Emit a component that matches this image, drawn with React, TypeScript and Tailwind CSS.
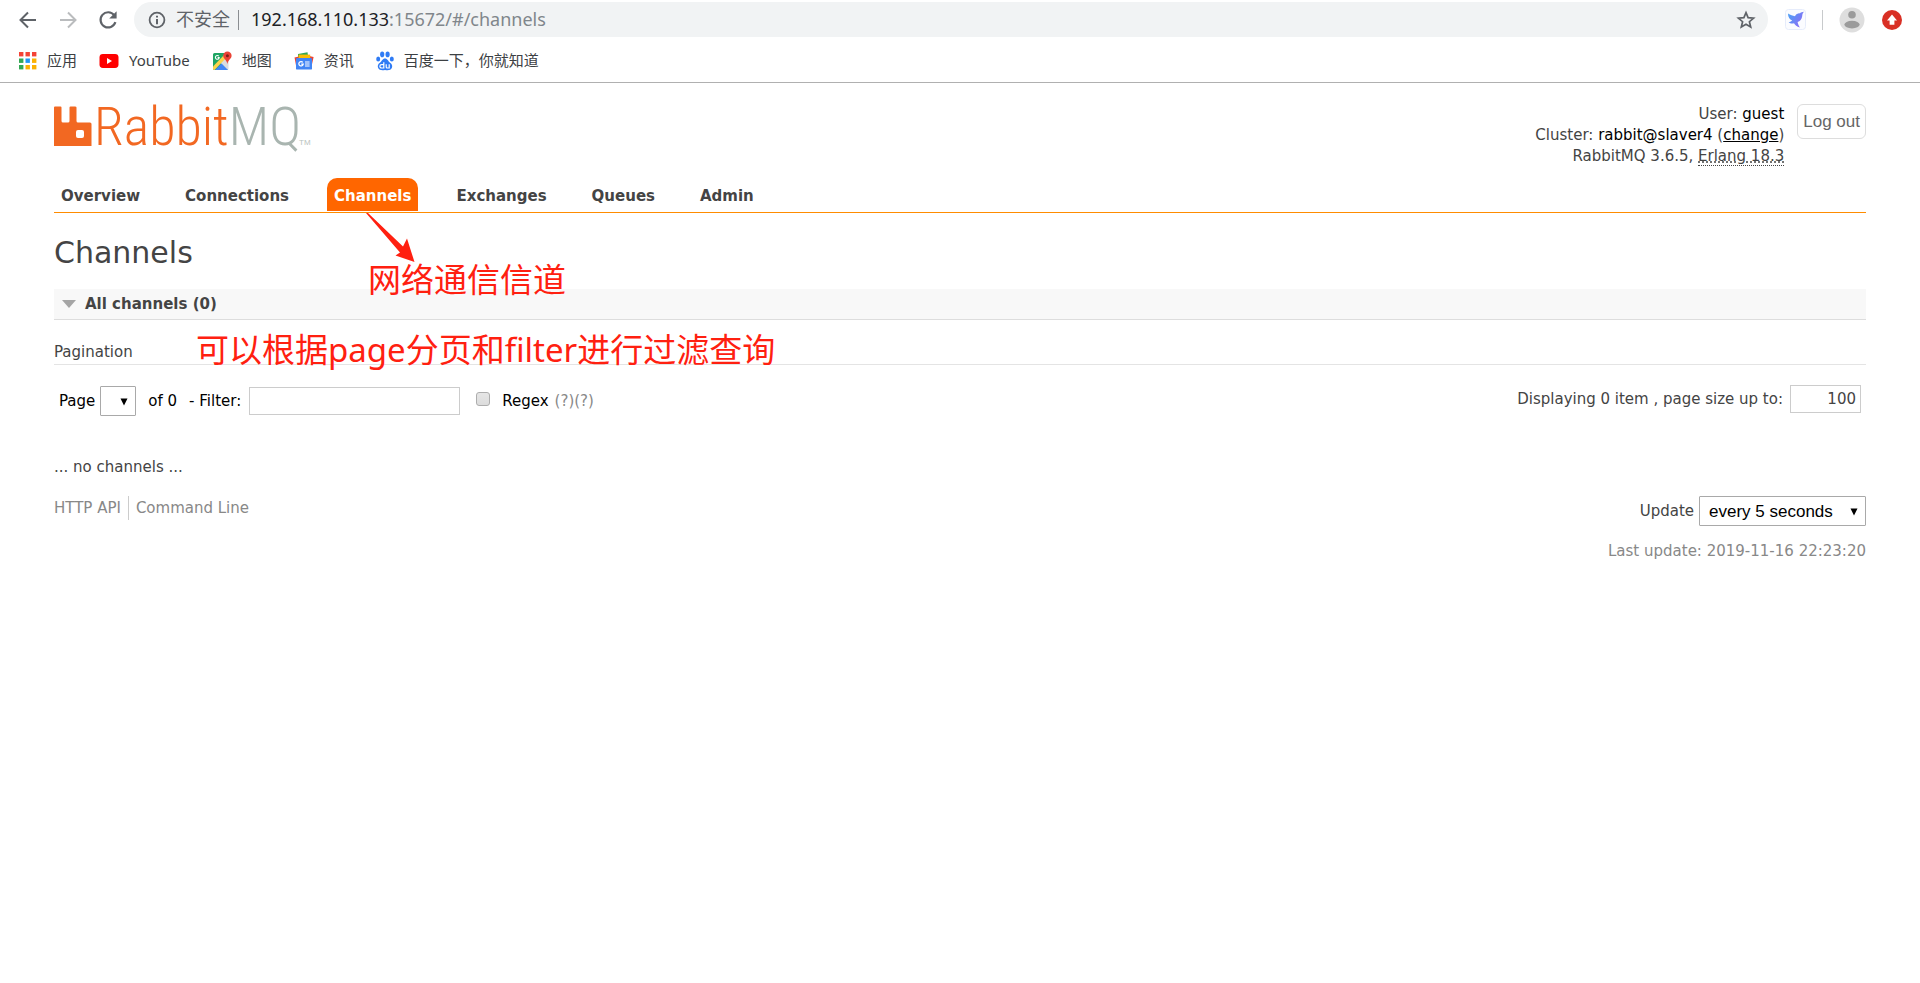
import React from "react";

const chromeFont = "font-['Noto_Sans','Noto_Sans_CJK_SC',sans-serif]";

function BackIcon() {
  return (
    <svg width="20" height="20" viewBox="0 0 20 20" fill="none" stroke="currentColor" strokeWidth="2">
      <path d="M18 10H3M10 2.5L2.5 10L10 17.5" />
    </svg>
  );
}

function ForwardIcon() {
  return (
    <svg width="20" height="20" viewBox="0 0 20 20" fill="none" stroke="currentColor" strokeWidth="2">
      <path d="M2 10H17M10 2.5L17.5 10L10 17.5" />
    </svg>
  );
}

function ReloadIcon() {
  return (
    <svg width="20" height="20" viewBox="0 0 20 20" fill="none">
      <path d="M16.2 5.2A7.6 7.6 0 1 0 17.4 12.2" stroke="#5f6368" strokeWidth="2.2" />
      <path d="M18.6 1.2V8.6H11.2Z" fill="#5f6368" />
    </svg>
  );
}

function InfoIcon() {
  return (
    <svg width="18" height="18" viewBox="0 0 18 18" fill="none">
      <circle cx="9" cy="9" r="7.4" stroke="#5f6368" strokeWidth="1.8" />
      <path d="M9 8V13.2M9 4.8V6.6" stroke="#5f6368" strokeWidth="2" />
    </svg>
  );
}

function StarIcon() {
  return (
    <svg width="20" height="20" viewBox="0 0 20 20" fill="none">
      <path
        d="M10 2.6L12.1 7.6L17.6 8.1L13.4 11.7L14.7 17L10 14.2L5.3 17L6.6 11.7L2.4 8.1L7.9 7.6Z"
        stroke="#5f6368"
        strokeWidth="1.7"
      />
    </svg>
  );
}

function BirdIcon() {
  return (
    <svg width="21" height="21" viewBox="0 0 21 21">
      <defs>
        <linearGradient id="bird" x1="0" y1="0" x2="1" y2="0.6">
          <stop offset="0" stopColor="#4aa5f5" />
          <stop offset="1" stopColor="#8a6cf6" />
        </linearGradient>
      </defs>
      <rect x="0.5" y="0.5" width="20" height="20" rx="3" fill="#fbfcff" stroke="#e6ecfb" />
      <path
        d="M3 4.4C5.500 6.200 7.600 6.400 10 7.200C11.400 4.200 13.800 4.400 15 4.200C16 3.200 17.400 3 19 2.800C17.600 4 17.400 5.400 17.200 7.200C16.800 10.200 15 12 12.600 13C13 15 13.600 16.800 15 18.600C11.800 17.600 10 16 9 14.200C7 14.800 5 14.400 3.600 13.200C5.400 13 6.400 12.400 7.200 11.600C4.600 10.400 3 7.800 3 4.400Z"
        fill="url(#bird)"
      />
    </svg>
  );
}

function AvatarIcon() {
  return (
    <svg width="26" height="26" viewBox="0 0 26 26">
      <circle cx="13" cy="13" r="12.5" fill="#dedede" />
      <circle cx="13" cy="7.8" r="3.8" fill="#9b9b9b" />
      <ellipse cx="13" cy="17.6" rx="7.6" ry="3.8" fill="#9b9b9b" />
    </svg>
  );
}

function UpdateIcon() {
  return (
    <svg width="20" height="20" viewBox="0 0 20 20">
      <circle cx="10" cy="10" r="10" fill="#d93025" />
      <path d="M10 4.6L15 10.4H12.4V14.8H7.6V10.4H5Z" fill="#fff" />
    </svg>
  );
}

function AppsIcon() {
  const colors = ["#f44336", "#f44336", "#f44336", "#34a853", "#2196f3", "#fbb103", "#34a853", "#fbb103", "#fbb103"];
  return (
    <svg width="18" height="18" viewBox="0 0 18 18">
      {colors.map((c, i) => (
        <rect key={i} x={(i % 3) * 6.5} y={Math.floor(i / 3) * 6.5} width="4.4" height="4.4" fill={c} />
      ))}
    </svg>
  );
}

function YouTubeIcon() {
  return (
    <svg width="20" height="20" viewBox="0 0 20 20">
      <rect x="0.5" y="3" width="19" height="14" rx="3.4" fill="#f00" />
      <path d="M8 7L13 10L8 13Z" fill="#fff" />
    </svg>
  );
}

function MapsIcon() {
  return (
    <svg width="20" height="20" viewBox="0 0 20 20">
      <path d="M1 3.500A1.500 1.500 0 0 1 2.500 2H16V19H2.500A1.500 1.500 0 0 1 1 17.500Z" fill="#1fa463" />
      <path d="M11 9L16.500 6V17.500A1.500 1.500 0 0 1 15 19L8.500 12Z" fill="#dadce0" />
      <path d="M1 15.500L13 3L15.500 5.500L2.500 19A1.500 1.500 0 0 1 1 17.500Z" fill="#fdd34b" />
      <path d="M3 19L9.500 12.500L16 19Z" fill="#4285f4" />
      <path d="M6.800 5.200A1.900 1.900 0 1 0 7.200 6.600H5.600" fill="none" stroke="#fff" strokeWidth="1.1" />
      <path d="M15.400 0.600A4.200 4.200 0 0 1 19.600 4.800C19.600 8 16.200 8.400 15.400 13C14.600 8.400 11.200 8 11.200 4.800A4.200 4.200 0 0 1 15.400 0.600Z" fill="#ea4335" />
      <circle cx="15.4" cy="4.8" r="1.5" fill="#7d1f16" />
    </svg>
  );
}

function NewsIcon() {
  return (
    <svg width="20" height="20" viewBox="0 0 20 20">
      <path d="M4 3L13.5 1.2L14.5 8H4Z" fill="#34a853" />
      <path d="M0.500 6.500L5 5.600L6 17L2.4 16.6Z" fill="#ea4335" />
      <path d="M13 4.4L19.6 6L17.4 16L13 15Z" fill="#ea4335" />
      <rect x="4.6" y="3.6" width="11.6" height="6" fill="#fbbc04" />
      <rect x="2" y="7" width="16" height="11.6" rx="1.2" fill="#4285f4" />
      <path d="M8.8 11.4A2.2 2.2 0 1 0 9.2 13.2H7.2" fill="none" stroke="#fff" strokeWidth="1.3" />
      <path d="M11 11H15.6M11 13H15.6M11 15H15.6" stroke="#fff" strokeWidth="1.1" />
    </svg>
  );
}

function BaiduIcon() {
  return (
    <svg width="18" height="20" viewBox="0 0 18 20" fill="#2f7bf5">
      <ellipse cx="6.2" cy="3.4" rx="2.1" ry="2.8" />
      <ellipse cx="11.6" cy="3.4" rx="2.1" ry="2.8" />
      <ellipse cx="2.2" cy="8" rx="2" ry="2.6" />
      <ellipse cx="15.8" cy="8" rx="2" ry="2.6" />
      <path d="M9 7.4C11.6 7.4 12 10 13.8 11.4C16.4 13.2 16.6 15 15.8 17C14.8 19.4 12 19.4 9 19C6 19.4 3.2 19.4 2.2 17C1.4 15 1.6 13.2 4.2 11.4C6 10 6.4 7.4 9 7.4Z" />
      <path d="M7.8 11.2V17H5.6A1.6 1.6 0 0 1 5.6 13.6H7.8M10.2 13.2V16A1 1 0 0 0 11.2 17H13.2V13.2" fill="none" stroke="#fff" strokeWidth="1.2" />
    </svg>
  );
}

function SelectArrow() {
  return (
    <svg className="pointer-events-none absolute right-2 top-3" width="8" height="8" viewBox="0 0 8 8" aria-hidden="true">
      <path d="M0.5 0.5H7.5L4 7.5Z" fill="#000" />
    </svg>
  );
}

const bookmarks = [
  { label: "应用", icon: <AppsIcon /> },
  { label: "YouTube", icon: <YouTubeIcon /> },
  { label: "地图", icon: <MapsIcon /> },
  { label: "资讯", icon: <NewsIcon /> },
  { label: "百度一下，你就知道", icon: <BaiduIcon /> },
];

function BrowserChrome() {
  return (
    <div className={`${chromeFont} border-b border-[#b0b0b0] bg-white`}>
      <div className="flex h-[39px] items-center px-[18px]">
        <div className="flex items-center gap-5 text-[#5f6368]">
          <button aria-label="Back"><BackIcon /></button>
          <button aria-label="Forward" className="text-[#babcbe]"><ForwardIcon /></button>
          <button aria-label="Reload"><ReloadIcon /></button>
        </div>
        <div className="ml-4 flex h-[35px] flex-1 items-center rounded-full bg-[#f1f3f4] pl-[14px] pr-3 text-[18px]">
          <InfoIcon />
          <span className="ml-[10px] text-[#5f6368]">不安全</span>
          <span className="ml-2 h-5 w-px bg-[#8a8d91]" />
          <span className="ml-3 flex-1 text-[#80868b]">
            <span className="text-[#202124]">192.168.110.133</span>:15672/#/channels
          </span>
          <button aria-label="Bookmark"><StarIcon /></button>
        </div>
        <div className="ml-[17px] flex items-center">
          <BirdIcon />
          <span className="ml-4 h-5 w-px bg-[#c8cacc]" />
          <button aria-label="Profile" className="ml-4"><AvatarIcon /></button>
          <button aria-label="Update" className="ml-[17px]"><UpdateIcon /></button>
        </div>
      </div>
      <div className="flex h-[43px] items-center gap-[22px] pl-[19px] text-[15px] text-[#3c4043]">
        {bookmarks.map((b) => (
          <a key={b.label} href="#" className="flex items-center gap-[10px]">
            {b.icon}
            {b.label}
          </a>
        ))}
      </div>
    </div>
  );
}

function Logo() {
  return (
    <svg width="270" height="66" viewBox="0 -12 270 66" role="img" aria-label="RabbitMQ">
      <path
        d="M1 1.500H6.500Q7.500 1.500 7.500 2.500V16Q7.500 17.500 9 17.500H14Q15.500 17.500 15.500 16V2.500Q15.500 1.500 16.500 1.500H21Q22.500 1.500 22.500 2.500V16Q22.500 17.500 24 17.500H36Q37.500 17.500 37.500 19V41H0V2.500Q0 1.500 1 1.500Z"
        fill="#f26822"
      />
      <rect x="22" y="25" width="8" height="8" rx="2" fill="#fff" />
      <text x="40" y="40" fontSize="54" fontWeight="300" fontFamily="'Roboto Condensed','Liberation Sans Narrow',sans-serif" fill="#f26822">
        Rabbit<tspan fill="#a9b5b0">MQ</tspan>
      </text>
      <text x="245" y="40" fontSize="8" fontFamily="'Liberation Sans',sans-serif" fill="#b9c2be">TM</text>
    </svg>
  );
}

const tabs = ["Overview", "Connections", "Channels", "Exchanges", "Queues", "Admin"];

function Header() {
  return (
    <header>
      <div className="flex h-[88px] items-start justify-between pt-[10px]">
        <a href="#/"><Logo /></a>
        <div className="flex items-start gap-[13px] pt-[11px]">
          <div className="text-right leading-[21px]">
            <div>User: <span className="text-black">guest</span></div>
            <div>
              Cluster: <span className="text-black">rabbit@slaver4</span> (
              <a href="#/cluster-name" className="text-black underline">change</a>)
            </div>
            <div>
              RabbitMQ 3.6.5,{" "}
              <abbr className="border-b border-dotted border-[#444] underline decoration-dotted" title="Erlang/OTP 18">Erlang 18.3</abbr>
            </div>
          </div>
          <button className="h-[35px] rounded-md border border-[#ddd] px-[5px] font-['Liberation_Sans',sans-serif] text-[17px] text-[#666]">
            Log out
          </button>
        </div>
      </div>
      <nav className="mt-[7px] flex gap-[31px] border-b border-[#ff8c00] pb-px font-bold">
        {tabs.map((t) => (
          <a
            key={t}
            href={`#/${t.toLowerCase()}`}
            className={`flex h-[33px] items-center rounded-t-[10px] px-[7px] pt-[3px] ${t === "Channels" ? "bg-[#ff6600] text-white" : ""}`}
          >
            {t}
          </a>
        ))}
      </nav>
    </header>
  );
}

function Annotations() {
  return (
    <div className="pointer-events-none text-[33px] leading-[40px] whitespace-nowrap text-[#ff2010] font-['Noto_Sans','Noto_Sans_CJK_SC',sans-serif]">
      <svg className="absolute left-[366px] top-[213px]" width="50" height="50" viewBox="0 0 50 50">
        <path d="M0 0L2 0L37 33.500L41 25.500L48.500 49L29.500 42.500L34 39.500Z" fill="#ff2010" />
      </svg>
      <div className="absolute left-[368px] top-[260px]">网络通信信道</div>
      <div className="absolute left-[196px] top-[330px]">可以根据page分页和filter进行过滤查询</div>
    </div>
  );
}

export default function App() {
  return (
    <div className="relative min-h-screen bg-white">
      <BrowserChrome />
      <div className="px-[54px] font-['DejaVu_Sans',sans-serif] text-[15px] leading-[21px] text-[#444]">
        <Header />
        <main>
          <h1 className="mt-5 text-[30px] leading-[40px]">Channels</h1>
          <h2 className="mt-4 flex h-[31px] items-center gap-[9px] border-b border-[#ddd] bg-[#f8f8f8] pl-2 font-bold">
            <svg width="14" height="8" viewBox="0 0 14 8"><path d="M0 0H14L7 8Z" fill="#a5a5a5" /></svg>
            All channels (0)
          </h2>
          <h3 className="mt-[22px] border-b border-[#e4e4e4] pb-px">Pagination</h3>
          <div className="mt-5 flex items-start justify-between px-[5px]">
            <div className="flex h-8 items-center text-black">
              <label htmlFor="page">Page</label>
              <div className="relative ml-[5px]">
                <select id="page" className="block h-[30px] w-9 appearance-none rounded-[1px] border border-[#a9a9a9] bg-white" />
                <SelectArrow />
              </div>
              <span className="ml-3">of 0</span>
              <label htmlFor="filter" className="ml-3">- Filter:</label>
              <input id="filter" type="text" className="ml-2 h-7 w-[211px] border border-[#ccc] px-1" />
              <input
                id="regex"
                type="checkbox"
                className="mb-1 ml-4 size-[14px] appearance-none rounded-[3px] border border-[#adadad] bg-linear-to-b from-[#e6e6e6] to-[#dcdcdc]"
              />
              <label htmlFor="regex" className="ml-3">Regex</label>
              <span className="ml-[6px] text-[#888]">(?)(?)</span>
            </div>
            <div className="flex items-center">
              <label htmlFor="size">Displaying 0 item , page size up to:</label>
              <input id="size" type="text" defaultValue="100" className="ml-[7px] h-7 w-[71px] border border-[#ccc] px-1 text-right" />
            </div>
          </div>
          <p className="mt-10">... no channels ...</p>
        </main>
        <footer className="mt-[18px] flex items-start justify-between text-[#888]">
          <div className="flex">
            <a href="/api" className="border-r border-[#ccc] pr-[7px] leading-6">HTTP API</a>
            <a href="/cli" className="pl-[7px] leading-6">Command Line</a>
          </div>
          <div className="flex flex-col items-end">
            <div className="flex items-center text-[#444]">
              <label htmlFor="update">Update</label>
              <div className="relative ml-[5px]">
                <select
                  id="update"
                  className="block h-[30px] w-[167px] appearance-none rounded-[1px] border border-[#a9a9a9] bg-white pl-[9px] font-['Liberation_Sans',sans-serif] text-[17px] text-black"
                >
                  <option>every 5 seconds</option>
                </select>
                <SelectArrow />
              </div>
            </div>
            <div className="mt-[15px]">Last update: 2019-11-16 22:23:20</div>
          </div>
        </footer>
      </div>
      <Annotations />
    </div>
  );
}
